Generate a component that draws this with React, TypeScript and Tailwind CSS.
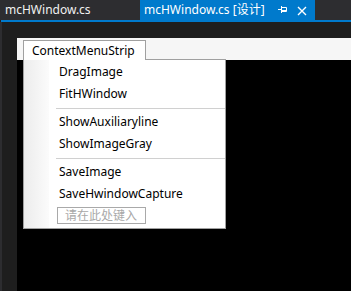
import React from "react";

const FONT = {
  fontFamily: '"Noto Sans", "Noto Sans CJK SC", sans-serif',
};

type Entry = { label: string } | { sep: true };

const ENTRIES: Entry[] = [
  { label: "DragImage" },
  { label: "FitHWindow" },
  { sep: true },
  { label: "ShowAuxiliaryline" },
  { label: "ShowImageGray" },
  { sep: true },
  { label: "SaveImage" },
  { label: "SaveHwindowCapture" },
];

function PinIcon() {
  return (
    <svg width="10" height="8" viewBox="0 0 10 8" fill="none" stroke="#ffffff" strokeWidth="1">
      <path d="M0 4.5H3.5M3.5 1V8M3.5 2.5H8.5V6.5H3.5M3.5 5.5H8.5" />
    </svg>
  );
}

function CloseIcon() {
  return (
    <svg width="10" height="10" viewBox="0 0 10 10" fill="none" stroke="#ffffff" strokeWidth="1.4">
      <path d="M1 1L9 9M9 1L1 9" />
    </svg>
  );
}

export default function App() {
  return (
    <div className="w-[351px] h-[291px] flex flex-col bg-[#1e1e1e] overflow-hidden" style={FONT}>
      {/* tab well */}
      <div className="h-[20px] flex bg-[#2d2d30] text-[12px] leading-[20px] whitespace-nowrap">
        <div className="w-[140px] shrink-0 pl-[5px] text-[#f1f1f1]">mcHWindow.cs</div>
        <div className="w-[175px] shrink-0 flex items-center bg-[#007acc] text-white pl-[4px]">
          <span className="leading-[20px] shrink-0">mcHWindow.cs [设计]</span>
          <span className="ml-auto mt-[-2px] flex shrink-0">
            <PinIcon />
          </span>
          <span className="ml-[9px] mr-[8px] mt-[2px] flex shrink-0">
            <CloseIcon />
          </span>
        </div>
      </div>
      <div className="h-[2px] ml-[1px] bg-[#007acc]" />

      {/* designer area */}
      <div className="flex-1 flex border-l-2 border-[#2d2d30]">
        <div className="flex-1 pt-[16px] pl-[15px] flex">
          <div className="flex-1 bg-[linear-gradient(to_bottom,#f6f6f6_22px,#000000_22px)] pt-[2px] pl-[6px] text-[12px] text-black">
            {/* strip label */}
            <div className="relative z-10 w-[123px] h-[20px] bg-white border border-b-0 border-[#a0a0a0] pl-[8px] leading-[19px]">
              ContextMenuStrip
            </div>

            {/* menu */}
            <div className="w-[203px] mt-[-1px] flex bg-white border border-[#a0a0a0]">
              <div className="w-[25px] bg-gradient-to-r from-[#ececec] to-[#fbfbfb]" />
              <div className="flex-1 flex flex-col py-[1px]">
                {ENTRIES.map((e, i) =>
                  "sep" in e ? (
                    <div key={i} className="h-[6px] flex items-center pl-[7px]">
                      <div className="flex-1 h-px bg-[#d0d0d0]" />
                    </div>
                  ) : (
                    <div key={i} className="h-[22px] pl-[10px] leading-[22px] whitespace-nowrap">
                      {e.label}
                    </div>
                  )
                )}
                <div className="h-[22px] pl-[8px] pt-[2px]">
                  <div className="w-[89px] h-[17px] border border-[#a9a9a9] pl-[7px] text-[12px] leading-[15px] text-[#a8a8a8]">
                    请在此处键入
                  </div>
                </div>
              </div>
            </div>
          </div>
        </div>
      </div>
    </div>
  );
}
